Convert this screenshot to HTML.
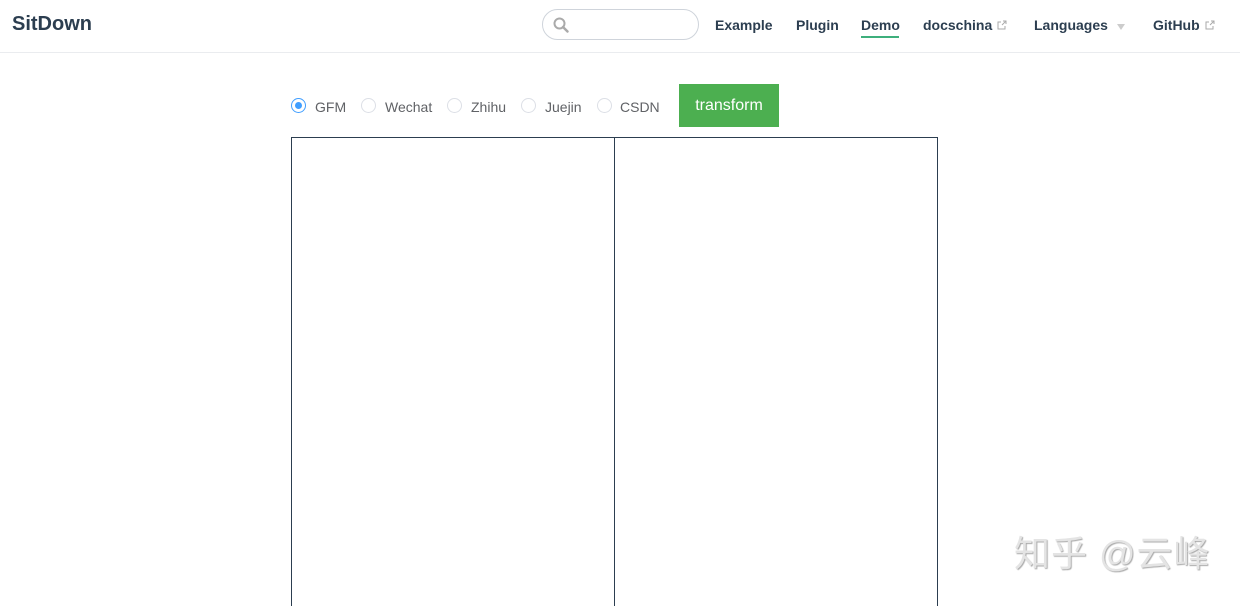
<!DOCTYPE html>
<html><head><meta charset="utf-8"><style>
*{box-sizing:border-box;margin:0;padding:0}
html,body{width:1240px;height:606px;overflow:hidden}
body{background:#fff;font-family:"Liberation Sans",Arial,sans-serif;color:#2c3e50;position:relative}
.hdr{position:absolute;left:0;top:0;width:1240px;height:53px;border-bottom:1px solid #eaecef}
.logo{position:absolute;left:12px;top:13px;font-size:20px;font-weight:bold;color:#2c3e50}
.search{position:absolute;left:542px;top:9px;width:157px;height:31px;border:1px solid #cfd4db;border-radius:16px}
.search svg{position:absolute;left:10px;top:7px}
.nav{position:absolute;top:17px;font-size:14px;font-weight:bold;color:#2c3e50}
.ext{display:inline-block;margin-left:5px;vertical-align:0}
.r{position:absolute;top:98px;width:15px;height:15px;border:1px solid #dcdfe6;border-radius:50%}
.r.on{border-color:#409eff}
.r.on:after{content:"";position:absolute;left:3px;top:3px;width:7px;height:7px;border-radius:50%;background:#409eff}
.lbl{position:absolute;top:99px;font-size:14px;color:#606266}
.btn{position:absolute;left:679px;top:84px;width:100px;height:43px;background:#4caf50;color:#fff;font-size:16px;text-align:center;line-height:44px}
.pane{position:absolute;top:137px;height:469px;border:1px solid #2c3e50;border-bottom:none}
.wm{position:absolute;left:1014px;top:532px;font-size:36px;line-height:44px;color:#e4e4e4;font-family:"Liberation Sans","Noto Sans CJK SC",sans-serif;text-shadow:1px 1px 1px #aaa;letter-spacing:1px}
</style></head><body>
<div class="hdr">
<div class="logo">SitDown</div>
<div class="search"><svg width="16" height="16" viewBox="0 0 16 16"><circle cx="6.5" cy="6.5" r="5" fill="none" stroke="#aaa" stroke-width="2"/><line x1="10" y1="10" x2="14.5" y2="14.5" stroke="#aaa" stroke-width="2.4" stroke-linecap="round"/></svg></div>
<div class="nav" style="left:715px">Example</div>
<div class="nav" style="left:796px">Plugin</div>
<div class="nav" style="left:861px">Demo<div style="position:absolute;left:0;top:19px;width:38px;height:2px;background:#3eaf7c"></div></div>
<div class="nav" style="left:923px">docschina<svg class="ext" width="10" height="10" viewBox="0 0 10 10"><path d="M8 6v3H1V2h3M6 1h3v3M9 1L5 5" fill="none" stroke="#aaa"/></svg></div>
<div class="nav" style="left:1034px">Languages<svg style="margin-left:9px" width="8" height="6" viewBox="0 0 8 6"><path d="M0 0h8L4 6z" fill="#ccc"/></svg></div>
<div class="nav" style="left:1153px">GitHub<svg class="ext" width="10" height="10" viewBox="0 0 10 10"><path d="M8 6v3H1V2h3M6 1h3v3M9 1L5 5" fill="none" stroke="#aaa"/></svg></div>
</div>
<div class="r on" style="left:291px"></div><div class="lbl" style="left:315px">GFM</div>
<div class="r" style="left:361px"></div><div class="lbl" style="left:385px">Wechat</div>
<div class="r" style="left:447px"></div><div class="lbl" style="left:471px">Zhihu</div>
<div class="r" style="left:521px"></div><div class="lbl" style="left:545px">Juejin</div>
<div class="r" style="left:597px"></div><div class="lbl" style="left:620px">CSDN</div>
<div class="btn">transform</div>
<div class="pane" style="left:291px;width:324px"></div>
<div class="pane" style="left:614px;width:324px"></div>
<div class="wm">知乎 @云峰</div>
</body></html>
